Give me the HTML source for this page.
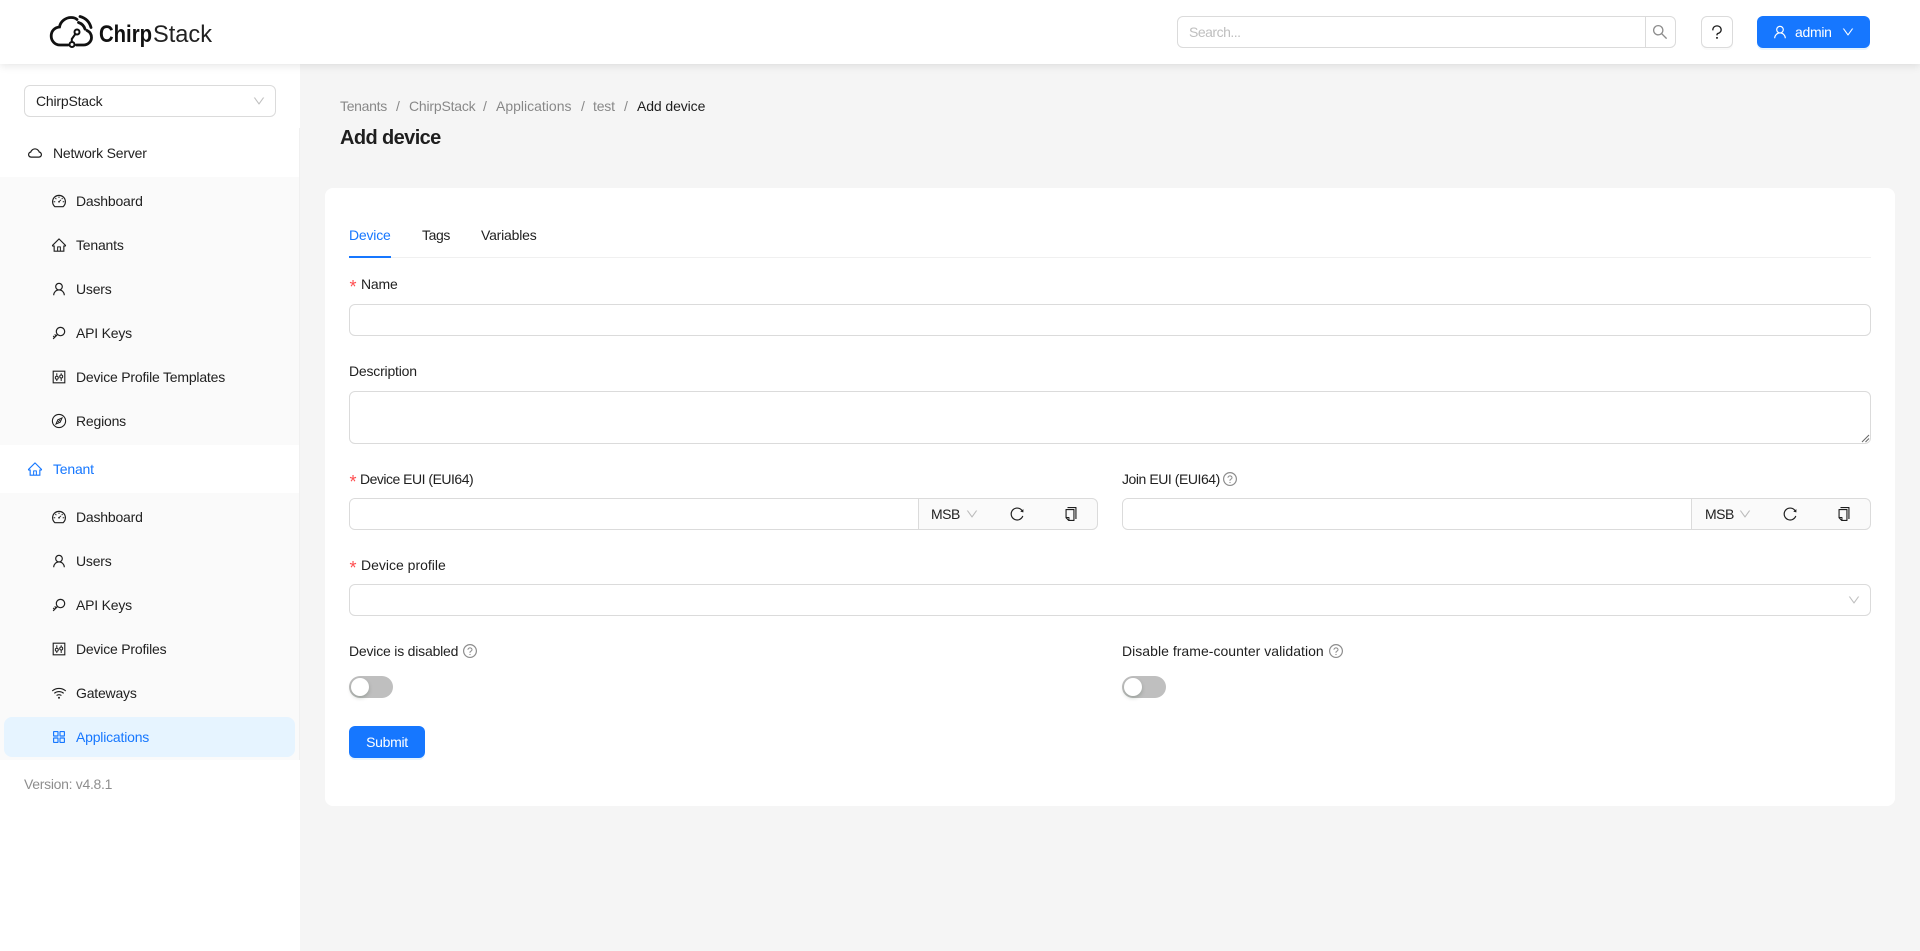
<!DOCTYPE html>
<html lang="en"><head><meta charset="utf-8"><title>ChirpStack - Add device</title>
<style>
*{box-sizing:border-box}
html,body{margin:0;padding:0;width:1920px;height:951px;overflow:hidden;background:#f5f5f5;font-family:"Liberation Sans",Arial,sans-serif;font-size:14px;color:rgba(0,0,0,.88)}
.a{position:absolute}
.t{position:absolute;white-space:nowrap;line-height:20px;height:20px;letter-spacing:-.2px}
.i{position:absolute;width:16px;height:16px;fill:currentColor;color:rgba(0,0,0,.88)}
.b{position:absolute;background:#fff;border:1px solid #dbdbdb;border-radius:6px}
.g{color:rgba(0,0,0,.45)}
.r{color:#ff4d4f;font-size:18px;line-height:18px;height:18px;letter-spacing:0}
.blue{color:#1677ff}
.q{color:rgba(0,0,0,.45)}
.c{color:rgba(0,0,0,.25);width:14px;height:14px}
.sw{position:absolute;width:44px;height:22px;border-radius:11px;background:#bfbfbf}
.sw:after{content:"";position:absolute;left:2px;top:2px;width:18px;height:18px;border-radius:50%;background:#fff;box-shadow:0 2px 4px rgba(0,35,11,.2)}
</style></head><body>
<svg width="0" height="0" style="position:absolute"><defs>
<symbol id="cloud" viewBox="0 0 1024 1024"><path d="M811.4 418.7C765.6 297.9 648.9 212 512.2 212S258.8 297.8 213 418.6C127.3 441.1 64 519.1 64 612c0 110.5 89.5 200 199.9 200h496.2C870.5 812 960 722.5 960 612c0-92.7-63.1-170.7-148.6-193.3zm36.3 281a123.07 123.07 0 01-87.6 36.3H263.9c-33.1 0-64.2-12.9-87.6-36.3A123.3 123.3 0 01140 612c0-28 9.1-54.3 26.2-76.3a125.7 125.7 0 0166.1-43.7l37.9-9.9 13.9-36.6c8.6-22.8 20.6-44.1 35.7-63.4a245.6 245.6 0 0152.4-49.9c41.1-28.9 89.5-44.2 140-44.2s98.9 15.3 140 44.2c19.9 14 37.5 30.8 52.4 49.9 15.1 19.3 27.1 40.6 35.7 63.4l13.8 36.5 37.8 10c54.3 14.5 92.1 63.8 92.1 120 0 33.1-12.9 64.3-36.3 87.7z"/></symbol>
<symbol id="home" viewBox="0 0 1024 1024"><path d="M946.5 505L560.1 118.8l-25.9-25.9a31.5 31.5 0 00-44.4 0L77.5 505a63.9 63.9 0 00-18.8 46c.4 35.2 29.7 63.3 64.9 63.3h42.5V940h691.8V614.3h43.4c17.1 0 33.2-6.7 45.3-18.8a63.6 63.6 0 0018.7-45.3c0-17-6.7-33.1-18.8-45.2zM568 868H456V664h112v204zm217.9-325.7V868H632V640c0-22.1-17.9-40-40-40H432c-22.1 0-40 17.9-40 40v228H238.1V542.3h-96l370-369.7 23.1 23.1L882 542.3h-96.1z"/></symbol>
<symbol id="user" viewBox="0 0 1024 1024"><path d="M858.5 763.6a374 374 0 00-80.6-119.5 375.63 375.63 0 00-119.5-80.6c-.4-.2-.8-.3-1.2-.5C719.5 518 760 444.7 760 362c0-137-111-248-248-248S264 225 264 362c0 82.7 40.5 156 102.8 201.1-.4.2-.8.3-1.2.5-44.8 18.9-85 46-119.5 80.6a375.63 375.63 0 00-80.6 119.5A371.7 371.7 0 00136 901.8a8 8 0 008 8.2h60c4.4 0 7.9-3.5 8-7.8 2-77.2 33-149.5 87.8-204.3 56.7-56.7 132-87.9 212.2-87.9s155.5 31.2 212.2 87.9C779 752.7 810 825 812 902.2c.1 4.4 3.6 7.8 8 7.8h60a8 8 0 008-8.2c-1-47.8-10.9-94.3-29.5-138.2zM512 534c-45.9 0-89.1-17.9-121.6-50.4S340 407.9 340 362c0-45.9 17.9-89.1 50.4-121.6S466.1 190 512 190s89.1 17.9 121.6 50.4S684 316.1 684 362c0 45.9-17.9 89.1-50.4 121.6S557.9 534 512 534z"/></symbol>
<symbol id="search" viewBox="0 0 1024 1024"><path d="M909.6 854.5L649.9 594.8C690.2 542.7 712 479 712 412c0-80.2-31.3-155.4-87.9-212.1-56.6-56.7-132-87.9-212.1-87.9s-155.5 31.3-212.1 87.9C143.2 256.5 112 331.8 112 412c0 80.1 31.3 155.5 87.9 212.1C256.5 680.8 331.8 712 412 712c67 0 130.6-21.8 182.7-62l259.7 259.6a8.2 8.2 0 0011.6 0l43.6-43.5a8.2 8.2 0 000-11.6zM570.4 570.4C528 612.7 471.8 636 412 636s-116-23.3-158.4-65.6C211.3 528 188 471.8 188 412s23.3-116.1 65.6-158.4C296 211.3 352.2 188 412 188s116.1 23.2 158.4 65.6S636 352.2 636 412s-23.3 116.1-65.6 158.4z"/></symbol>
<symbol id="down" viewBox="0 0 1024 1024"><path d="M884 256h-75c-5.1 0-9.9 2.5-12.9 6.6L512 654.2 227.9 262.6c-3-4.1-7.8-6.6-12.9-6.6h-75c-6.5 0-10.3 7.4-6.5 12.7l352.6 486.1c12.8 17.6 39 17.6 51.7 0l352.6-486.1c3.9-5.3.1-12.7-6.4-12.7z"/></symbol>
<symbol id="ques" viewBox="0 0 1024 1024"><path d="M764 280.9c-14-30.6-33.9-58.1-59.3-81.6C653.1 151.4 584.6 125 512 125s-141.1 26.4-192.7 74.2c-25.4 23.6-45.3 51-59.3 81.7-14.6 32-22 65.9-22 100.9v27c0 6.2 5 11.2 11.2 11.2h54c6.2 0 11.2-5 11.2-11.2v-27c0-99.5 88.6-180.4 197.6-180.4s197.6 80.9 197.6 180.4c0 40.8-14.5 79.2-42 111.2-27.2 31.7-65.6 54.4-108.1 64-24.3 5.5-46.2 19.2-61.7 38.8a110.85 110.85 0 00-23.9 68.6v31.4c0 6.2 5 11.2 11.2 11.2h54c6.2 0 11.2-5 11.2-11.2v-31.4c0-15.7 10.9-29.5 26-32.9 58.4-13.2 111.4-44.7 149.3-88.7 19.1-22.3 34-47.1 44.3-74 10.7-27.9 16.1-57.2 16.1-87 0-35-7.4-69-22-100.9zM512 787c-30.9 0-56 25.1-56 56s25.1 56 56 56 56-25.1 56-56-25.1-56-56-56z"/></symbol>
<symbol id="reload" viewBox="0 0 1024 1024"><path d="M909.1 209.3l-56.4 44.1C775.8 155.1 656.2 92 521.9 92 290 92 102.3 279.5 102 511.5 101.7 743.7 289.8 932 521.9 932c181.3 0 335.8-115 394.6-276.1 1.5-4.2-.7-8.9-4.9-10.3l-56.7-19.5a8 8 0 00-10.1 4.8c-1.8 5-3.8 10-5.9 14.9-17.3 41-42.1 77.8-73.7 109.4A344.77 344.77 0 01655.9 829c-42.3 17.9-87.4 27-133.8 27-46.5 0-91.5-9.1-133.8-27A341.5 341.5 0 01279 755.2a342.16 342.16 0 01-73.7-109.4c-17.9-42.4-27-87.4-27-133.9s9.1-91.5 27-133.9c17.3-41 42.1-77.8 73.7-109.4 31.6-31.6 68.4-56.4 109.3-73.8 42.3-17.9 87.4-27 133.8-27 46.5 0 91.5 9.1 133.8 27a341.5 341.5 0 01109.3 73.8c9.9 9.9 19.2 20.4 27.8 31.4l-60.2 47a8 8 0 003 14.1l175.6 43c5 1.2 9.9-2.6 9.9-7.7l.8-180.9c-.1-6.6-7.8-10.3-13-6.2z"/></symbol>
<symbol id="copy" viewBox="0 0 1024 1024"><path d="M832 64H296c-4.4 0-8 3.6-8 8v56c0 4.4 3.6 8 8 8h496v688c0 4.4 3.6 8 8 8h56c4.4 0 8-3.6 8-8V96c0-17.7-14.3-32-32-32zM704 192H192c-17.7 0-32 14.3-32 32v530.7c0 8.5 3.4 16.6 9.4 22.6l173.3 173.3c2.2 2.2 4.7 4 7.4 5.5v1.9h4.2c3.5 1.3 7.2 2 11 2H704c17.7 0 32-14.3 32-32V224c0-17.7-14.3-32-32-32zM350 856.2L263.9 770H350v86.2zM664 888H414V746c0-22.1-17.9-40-40-40H232V264h432v624z"/></symbol>
<symbol id="qc" viewBox="0 0 1024 1024"><path d="M512 64C264.6 64 64 264.6 64 512s200.6 448 448 448 448-200.6 448-448S759.4 64 512 64zm0 820c-205.4 0-372-166.6-372-372s166.6-372 372-372 372 166.6 372 372-166.6 372-372 372z"/><path d="M623.6 316.7C593.6 290.4 554 276 512 276s-81.6 14.5-111.6 40.7C369.2 344 352 380.7 352 420v7.6c0 4.4 3.6 8 8 8h48c4.4 0 8-3.6 8-8V420c0-44.1 43.1-80 96-80s96 35.9 96 80c0 31.1-22 59.6-56.1 72.7-21.2 8.1-39.2 22.3-52.1 40.9-13.1 19-19.9 41.8-19.9 64.9V620c0 4.4 3.6 8 8 8h48c4.4 0 8-3.6 8-8v-22.7a48.3 48.3 0 0130.9-44.8c59-22.7 97.1-74.7 97.1-132.5.1-39.3-17.1-76-48.3-103.3zM472 732a40 40 0 1080 0 40 40 0 10-80 0z"/></symbol>
<symbol id="dash" viewBox="0 0 1024 1024"><path d="M924.8 385.6a446.7 446.7 0 00-96-142.4 446.7 446.7 0 00-142.4-96C631.1 123.8 572.5 112 512 112s-119.1 11.8-174.4 35.2a446.7 446.7 0 00-142.4 96 446.7 446.7 0 00-96 142.4C75.8 440.9 64 499.5 64 560c0 132.7 58.3 257.7 159.9 343.1l1.7 1.4c5.8 4.8 13.1 7.5 20.6 7.5h531.7c7.5 0 14.8-2.7 20.6-7.5l1.7-1.4C901.7 817.7 960 692.7 960 560c0-60.5-11.9-119.1-35.2-174.4zM761.4 836H262.6A371.12 371.12 0 01140 560c0-99.4 38.7-192.8 109-263 70.3-70.3 163.7-109 263-109 99.4 0 192.8 38.7 263 109 70.3 70.3 109 163.7 109 263 0 105.6-44.5 205.5-122.6 276zM623.5 421.5a8.03 8.03 0 00-11.3 0L527.7 506c-18.7-5-39.4-.2-54.1 14.5a55.95 55.95 0 000 79.2 55.95 55.95 0 0079.2 0 55.87 55.87 0 0014.5-54.1l84.5-84.5c3.1-3.1 3.1-8.2 0-11.3l-28.3-28.3zM490 320h44c4.4 0 8-3.6 8-8v-80c0-4.4-3.6-8-8-8h-44c-4.4 0-8 3.6-8 8v80c0 4.4 3.6 8 8 8zm260 218v44c0 4.4 3.6 8 8 8h80c4.4 0 8-3.6 8-8v-44c0-4.4-3.6-8-8-8h-80c-4.4 0-8 3.6-8 8zm12.7-197.2l-31.1-31.1a8.03 8.03 0 00-11.3 0l-56.6 56.6a8.03 8.03 0 000 11.3l31.1 31.1c3.1 3.1 8.2 3.1 11.3 0l56.6-56.6c3.1-3.1 3.1-8.2 0-11.3zm-458.6-31.1a8.03 8.03 0 00-11.3 0l-31.1 31.1a8.03 8.03 0 000 11.3l56.6 56.6c3.1 3.1 8.2 3.1 11.3 0l31.1-31.1c3.1-3.1 3.1-8.2 0-11.3l-56.6-56.6zM262 530h-80c-4.4 0-8 3.6-8 8v44c0 4.4 3.6 8 8 8h80c4.4 0 8-3.6 8-8v-44c0-4.4-3.6-8-8-8z"/></symbol>
<symbol id="key" viewBox="0 0 1024 1024"><path d="M608 112c-167.9 0-304 136.1-304 304 0 70.3 23.9 135 63.9 186.5l-41.1 41.1-62.3-62.3a8.15 8.15 0 00-11.4 0l-39.8 39.8a8.15 8.15 0 000 11.4l62.3 62.3-44.9 44.9-62.3-62.3a8.15 8.15 0 00-11.4 0l-39.8 39.8a8.15 8.15 0 000 11.4l62.3 62.3-65.3 65.3a8.03 8.03 0 000 11.3l42.3 42.3c3.1 3.1 8.2 3.1 11.3 0l253.6-253.6A304.06 304.06 0 00608 720c167.9 0 304-136.1 304-304S775.9 112 608 112zm161.2 465.2C726.2 620.3 668.9 644 608 644c-60.9 0-118.2-23.7-161.2-66.8-43.1-43-66.8-100.3-66.8-161.2 0-60.9 23.7-118.2 66.8-161.2 43-43.1 100.3-66.8 161.2-66.8 60.9 0 118.2 23.7 161.2 66.8 43.1 43 66.8 100.3 66.8 161.2 0 60.9-23.7 118.2-66.8 161.2z"/></symbol>
<symbol id="ctrl" viewBox="0 0 16 16"><path d="M2.2 2.2h11.600v11.600H2.200z" fill="none" stroke="currentColor" stroke-width="1.100"/><path d="M5.800 4.200v2.600M5.800 10.600v1.400M10.200 4.200v1.400M10.200 9.400v2.600" fill="none" stroke="currentColor" stroke-width="1"/><circle cx="5.800" cy="8.700" r="1.500" fill="none" stroke="currentColor" stroke-width="1"/><circle cx="10.200" cy="7.500" r="1.500" fill="none" stroke="currentColor" stroke-width="1"/></symbol>
<symbol id="comp" viewBox="0 0 16 16"><circle cx="8" cy="8" r="6.600" fill="none" stroke="currentColor" stroke-width="1.100"/><path d="M11 5L9.200 9.200 5 11l1.800-4.200z" fill="none" stroke="currentColor" stroke-width="1"/><path d="M6.800 9.200L9.200 6.800" stroke="currentColor" stroke-width=".8"/></symbol>
<symbol id="wifi" viewBox="0 0 16 16"><path d="M1.200 6C5.100 2.600 10.900 2.600 14.800 6M3.300 8.300c2.800-2.300 6.600-2.300 9.400 0M5.600 10.500c1.400-1 3.400-1 4.800 0" fill="none" stroke="currentColor" stroke-width="1.100"/><circle cx="8" cy="12.700" r="1"/></symbol>
<symbol id="apps" viewBox="0 0 16 16"><g fill="none" stroke="currentColor" stroke-width="1.150"><rect x="2.600" y="2.600" width="4.400" height="4.400" rx=".3"/><rect x="9" y="2.600" width="4.400" height="4.400" rx=".3"/><rect x="2.600" y="9" width="4.400" height="4.400" rx=".3"/><rect x="9" y="9" width="4.400" height="4.400" rx=".3"/></g></symbol>
</defs></svg>

<!-- sidebar -->
<div class="a" style="left:0;top:64px;width:300px;height:887px;background:#fff"></div>
<div class="a" style="left:299px;top:128px;width:1px;height:632px;background:#f0f0f0"></div>
<div class="a" style="left:0;top:177px;width:299px;height:268px;background:#fafafa"></div>
<div class="a" style="left:0;top:493px;width:299px;height:267px;background:#fafafa"></div>
<div class="a" style="left:4px;top:717px;width:291px;height:40px;background:#e6f4ff;border-radius:8px"></div>

<div class="b" style="left:24px;top:85px;width:252px;height:32px"></div>
<span class="t" style="left:36px;top:91px">ChirpStack</span>
<svg class="i c" style="left:252px;top:94px"><use href="#down"/></svg>

<svg class="i" style="left:27px;top:145px"><use href="#cloud"/></svg><span class="t" style="left:53px;top:143px">Network Server</span>
<svg class="i" style="left:51px;top:193px"><use href="#dash"/></svg><span class="t" style="left:76px;top:191px">Dashboard</span>
<svg class="i" style="left:51px;top:237px"><use href="#home"/></svg><span class="t" style="left:76px;top:235px">Tenants</span>
<svg class="i" style="left:51px;top:281px"><use href="#user"/></svg><span class="t" style="left:76px;top:279px">Users</span>
<svg class="i" style="left:51px;top:325px"><use href="#key"/></svg><span class="t" style="left:76px;top:323px">API Keys</span>
<svg class="i" style="left:51px;top:369px"><use href="#ctrl"/></svg><span class="t" style="left:76px;top:367px">Device Profile Templates</span>
<svg class="i" style="left:51px;top:413px"><use href="#comp"/></svg><span class="t" style="left:76px;top:411px">Regions</span>

<svg class="i" style="left:27px;top:461px;color:#1677ff"><use href="#home"/></svg><span class="t blue" style="left:53px;top:459px">Tenant</span>
<svg class="i" style="left:51px;top:509px"><use href="#dash"/></svg><span class="t" style="left:76px;top:507px">Dashboard</span>
<svg class="i" style="left:51px;top:553px"><use href="#user"/></svg><span class="t" style="left:76px;top:551px">Users</span>
<svg class="i" style="left:51px;top:597px"><use href="#key"/></svg><span class="t" style="left:76px;top:595px">API Keys</span>
<svg class="i" style="left:51px;top:641px"><use href="#ctrl"/></svg><span class="t" style="left:76px;top:639px">Device Profiles</span>
<svg class="i" style="left:51px;top:685px"><use href="#wifi"/></svg><span class="t" style="left:76px;top:683px">Gateways</span>
<svg class="i" style="left:51px;top:729px;color:#1677ff"><use href="#apps"/></svg><span class="t blue" style="left:76px;top:727px">Applications</span>
<span class="t g" style="left:24px;top:774px;letter-spacing:-.3px">Version: v4.8.1</span>

<!-- header -->
<div class="a" style="left:0;top:0;width:1920px;height:64px;background:#fff;box-shadow:0 2px 8px rgba(0,0,0,.1)"></div>
<svg class="a" style="left:40px;top:0" width="190" height="64" viewBox="40 0 190 64">
<g fill="none" stroke="#111" stroke-width="2.800" stroke-linecap="round">
<path d="M68 45H60C54.500 45 51.200 40.500 51.200 36C51.200 31 54.500 27.500 59.500 27C60.500 21 66 17.500 71 17.500C73.500 17.500 75.500 18 77 19.500"/>
<path d="M80 16.500C85.500 18 89.500 22 91 27.500M78.500 22.500C81.500 23.500 84 26 85 29"/>
<path d="M87 30.500C90 32 91.500 34.500 91.500 37.500C91.500 41.500 88 45 83.500 45H76.500"/>
<path d="M71.800 41V39L75 34.500" stroke-width="2"/>
<circle cx="72" cy="44.500" r="2.500" stroke-width="2"/><circle cx="77" cy="32" r="2.500" stroke-width="2"/>
</g>
<text x="99" y="42" font-family="'Liberation Sans',sans-serif" font-size="24" font-weight="700" fill="#111" textLength="53" lengthAdjust="spacingAndGlyphs">Chirp</text>
<text x="153" y="42" font-family="'Liberation Sans',sans-serif" font-size="24" fill="#222" textLength="59" lengthAdjust="spacingAndGlyphs">Stack</text>
</svg>

<div class="b" style="left:1177px;top:16px;width:499px;height:32px"></div>
<div class="a" style="left:1645px;top:17px;width:1px;height:30px;background:#dbdbdb"></div>
<span class="t" style="left:1189px;top:22px;color:#bfbfbf;letter-spacing:-.5px">Search...</span>
<svg class="i q" style="left:1651px;top:23px;width:18px;height:18px"><use href="#search"/></svg>
<div class="b" style="left:1701px;top:16px;width:32px;height:32px;box-shadow:0 2px 0 rgba(0,0,0,.02)"></div>
<svg class="i" style="left:1708px;top:23px;width:18px;height:18px"><use href="#ques"/></svg>
<div class="a" style="left:1757px;top:16px;width:113px;height:32px;background:#1677ff;border-radius:6px;box-shadow:0 2px 0 rgba(5,145,255,.1)"></div>
<svg class="i" style="left:1772px;top:24px;color:#fff"><use href="#user"/></svg>
<span class="t" style="left:1795px;top:22px;color:#fff;letter-spacing:-.3px">admin</span>
<svg class="i" style="left:1841px;top:25px;color:#fff;width:14px;height:14px"><use href="#down"/></svg>

<!-- breadcrumb -->
<span class="t g" style="left:340px;top:96px;letter-spacing:-.3px">Tenants</span><span class="t g" style="left:396px;top:96px">/</span>
<span class="t g" style="left:409px;top:96px">ChirpStack</span><span class="t g" style="left:483px;top:96px">/</span>
<span class="t g" style="left:496px;top:96px;letter-spacing:0">Applications</span><span class="t g" style="left:581px;top:96px">/</span>
<span class="t g" style="left:593px;top:96px">test</span><span class="t g" style="left:624px;top:96px">/</span>
<span class="t" style="left:637px;top:96px;letter-spacing:-.1px">Add device</span>
<span class="t" style="left:340px;top:124px;font-size:20px;line-height:28px;height:28px;font-weight:700;letter-spacing:-.6px">Add device</span>

<!-- card -->
<div class="a" style="left:325px;top:188px;width:1570px;height:618px;background:#fff;border-radius:8px"></div>
<span class="t blue" style="left:349px;top:225px">Device</span>
<span class="t" style="left:422px;top:225px;letter-spacing:-.4px">Tags</span>
<span class="t" style="left:481px;top:225px">Variables</span>
<div class="a" style="left:349px;top:257px;width:1522px;height:1px;background:#f0f0f0"></div>
<div class="a" style="left:349px;top:256px;width:42px;height:2px;background:#1677ff"></div>

<span class="t r" style="left:349.500px;top:278px">*</span>
<span class="t" style="left:361px;top:274px">Name</span>
<div class="b" style="left:349px;top:304px;width:1522px;height:32px"></div>

<span class="t" style="left:349px;top:361px">Description</span>
<div class="b" style="left:349px;top:391px;width:1522px;height:53px"></div>
<svg class="a" style="left:1860px;top:433px" width="10" height="10"><path d="M9 2L2 9M9 5.500L5.500 9" stroke="#666" stroke-width="1" fill="none"/></svg>

<span class="t r" style="left:349.500px;top:473px">*</span>
<span class="t" style="left:360px;top:469px;letter-spacing:-.5px">Device EUI (EUI64)</span>
<div class="b" style="left:349px;top:498px;width:749px;height:32px;background:#fafafa"></div>
<div class="a" style="left:350px;top:499px;width:569px;height:30px;background:#fff;border-right:1px solid #dbdbdb;border-radius:5px 0 0 5px"></div>
<span class="t" style="left:931px;top:504px;letter-spacing:-.5px">MSB</span>
<svg class="i c" style="left:965px;top:507px"><use href="#down"/></svg>
<svg class="i" style="left:1009px;top:506px"><use href="#reload"/></svg>
<svg class="i" style="left:1063px;top:506px"><use href="#copy"/></svg>

<span class="t" style="left:1122px;top:469px;letter-spacing:-.45px">Join EUI (EUI64)</span>
<svg class="i q" style="left:1222px;top:471px"><use href="#qc"/></svg>
<div class="b" style="left:1122px;top:498px;width:749px;height:32px;background:#fafafa"></div>
<div class="a" style="left:1123px;top:499px;width:569px;height:30px;background:#fff;border-right:1px solid #dbdbdb;border-radius:5px 0 0 5px"></div>
<span class="t" style="left:1705px;top:504px;letter-spacing:-.5px">MSB</span>
<svg class="i c" style="left:1738px;top:507px"><use href="#down"/></svg>
<svg class="i" style="left:1782px;top:506px"><use href="#reload"/></svg>
<svg class="i" style="left:1836px;top:506px"><use href="#copy"/></svg>

<span class="t r" style="left:349.500px;top:559px">*</span>
<span class="t" style="left:361px;top:555px;letter-spacing:0">Device profile</span>
<div class="b" style="left:349px;top:584px;width:1522px;height:32px"></div>
<svg class="i c" style="left:1847px;top:593px"><use href="#down"/></svg>

<span class="t" style="left:349px;top:641px">Device is disabled</span>
<svg class="i q" style="left:462px;top:643px"><use href="#qc"/></svg>
<div class="sw" style="left:349px;top:676px"></div>
<span class="t" style="left:1122px;top:641px;letter-spacing:.03px">Disable frame-counter validation</span>
<svg class="i q" style="left:1328px;top:643px"><use href="#qc"/></svg>
<div class="sw" style="left:1122px;top:676px"></div>

<div class="a" style="left:349px;top:726px;width:76px;height:32px;background:#1677ff;border-radius:6px;box-shadow:0 2px 0 rgba(5,145,255,.1);color:#fff;text-align:center;line-height:32px;letter-spacing:-.3px">Submit</div>
</body></html>
